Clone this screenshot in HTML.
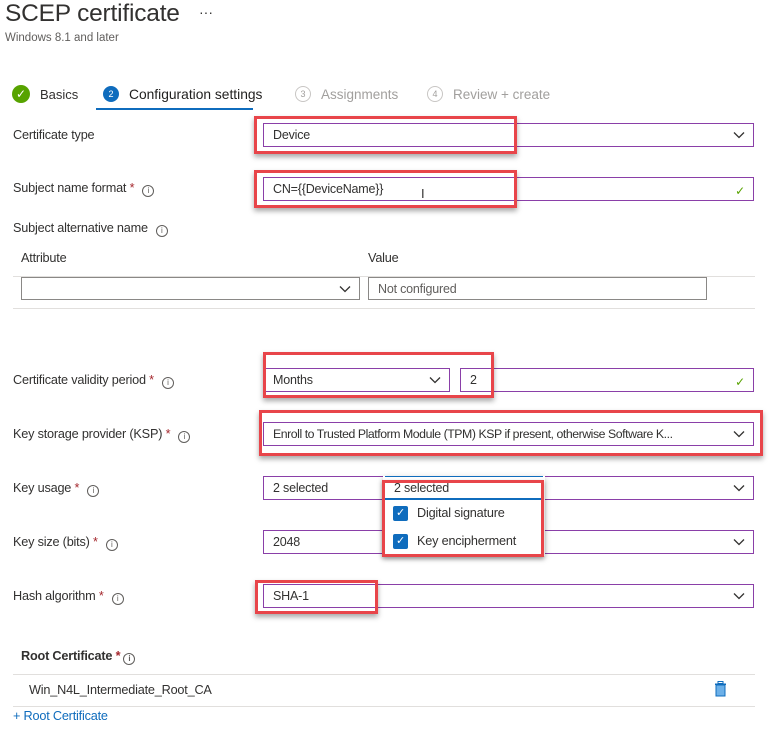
<!DOCTYPE html>
<html><head><meta charset="utf-8"><style>
*{box-sizing:border-box;margin:0;padding:0}
body{width:784px;height:736px;background:#fff;font-family:"Liberation Sans",sans-serif;color:#323130;position:relative;overflow:hidden;font-size:13px}
.a{position:absolute;white-space:nowrap}
.lbl{font-size:12.7px;letter-spacing:-0.2px}
.star{color:#a4262c}
.info{display:inline-block;width:12px;height:12px;border:1px solid #605e5c;border-radius:50%;font-size:8px;line-height:10px;text-align:center;color:#605e5c;margin-left:8px;vertical-align:-1px}
.in{position:absolute;border:1px solid #8a3fa8;height:24px;background:#fff;padding-left:9px;line-height:22px;font-size:12.5px;letter-spacing:-0.2px;overflow:hidden;white-space:nowrap}
.chev{position:absolute;right:8px;top:7px;width:8px;height:8px}
.red{position:absolute;border:3px solid #e8454a;box-shadow:0 3px 5px rgba(0,0,0,.35)}
.chk{position:absolute;right:8px;top:2px;color:#57a300;font-size:12px}
.line{position:absolute;height:1px;background:#e1dfdd}
.cb{display:inline-block;width:15px;height:15px;background:#0f6cbd;border-radius:2px;color:#fff;font-size:11px;text-align:center;line-height:15px;vertical-align:middle;margin-right:9px}
</style></head><body>
<svg width="0" height="0" style="position:absolute"><defs><symbol id="cv" viewBox="0 0 12 8"><path d="M1 1.5 L6 6.5 L11 1.5" fill="none" stroke="#323130" stroke-width="1.3"/></symbol></defs></svg>

<div class="a" style="left:5px;top:0px;font-size:24.5px;color:#323130;letter-spacing:-0.2px">SCEP certificate</div>
<div class="a" style="left:199px;top:4px;font-size:14px">···</div>
<div class="a" style="left:5px;top:32px;font-size:11.5px;color:#605e5c">Windows 8.1 and later</div>

<div class="a" style="left:12px;top:85px;width:18px;height:18px;border-radius:50%;background:#57a300;color:#fff;font-size:12px;text-align:center;line-height:18px">✓</div>
<div class="a" style="left:40px;top:87px;font-size:13px">Basics</div>
<div class="a" style="left:103px;top:86px;width:16px;height:16px;border-radius:50%;background:#0f6cbd;color:#fff;font-size:9px;text-align:center;line-height:16px">2</div>
<div class="a" style="left:129px;top:87px;font-size:13.8px;color:#201f1e">Configuration settings</div>
<div class="a" style="left:96px;top:108px;width:157px;height:2px;background:#0f6cbd"></div>
<div class="a" style="left:295px;top:86px;width:16px;height:16px;border-radius:50%;border:1px solid #c8c6c4;color:#a19f9d;font-size:9px;text-align:center;line-height:14px">3</div>
<div class="a" style="left:321px;top:87px;font-size:13.5px;color:#a19f9d">Assignments</div>
<div class="a" style="left:427px;top:86px;width:16px;height:16px;border-radius:50%;border:1px solid #c8c6c4;color:#a19f9d;font-size:9px;text-align:center;line-height:14px">4</div>
<div class="a" style="left:453px;top:87px;font-size:13.5px;color:#a19f9d">Review + create</div>

<div class="a lbl" style="left:13px;top:128px">Certificate type</div>
<div class="in" style="left:263px;top:123px;width:491px">Device<svg class="chev" style="width:12px"><use href="#cv"/></svg></div>
<div class="red" style="left:254px;top:116px;width:263px;height:38px"></div>

<div class="a lbl" style="left:13px;top:181px">Subject name format <span class="star">*</span><span class="info">i</span></div>
<div class="in" style="left:263px;top:177px;width:491px">CN={{DeviceName}}<span class="chk">✓</span></div>
<div class="a" style="left:421px;top:186px;font-size:13px">I</div>
<div class="red" style="left:254px;top:170px;width:263px;height:38px"></div>

<div class="a lbl" style="left:13px;top:221px">Subject alternative name<span class="info">i</span></div>
<div class="a lbl" style="left:21px;top:251px;color:#323130">Attribute</div>
<div class="a lbl" style="left:368px;top:251px">Value</div>
<div class="line" style="left:13px;top:276px;width:742px"></div>
<div class="in" style="left:21px;top:277px;width:339px;height:23px;border-color:#8a8886"><svg class="chev" style="width:12px"><use href="#cv"/></svg></div>
<div class="in" style="left:368px;top:277px;width:339px;height:23px;border-color:#8a8886;color:#605e5c">Not configured</div>
<div class="line" style="left:13px;top:308px;width:742px"></div>

<div class="a lbl" style="left:13px;top:373px">Certificate validity period <span class="star">*</span><span class="info">i</span></div>
<div class="in" style="left:263px;top:368px;width:187px">Months<svg class="chev" style="width:12px"><use href="#cv"/></svg></div>
<div class="in" style="left:460px;top:368px;width:294px">2<span class="chk">✓</span></div>
<div class="red" style="left:263px;top:352px;width:231px;height:46px"></div>

<div class="a lbl" style="left:13px;top:427px">Key storage provider (KSP) <span class="star">*</span><span class="info">i</span></div>
<div class="in" style="left:263px;top:422px;width:491px;font-size:12.3px;letter-spacing:-0.45px">Enroll to Trusted Platform Module (TPM) KSP if present, otherwise Software K...<svg class="chev" style="width:12px"><use href="#cv"/></svg></div>
<div class="red" style="left:259px;top:410px;width:504px;height:46px"></div>

<div class="a lbl" style="left:13px;top:481px">Key usage <span class="star">*</span><span class="info">i</span></div>
<div class="in" style="left:263px;top:476px;width:491px">2 selected<svg class="chev" style="width:12px"><use href="#cv"/></svg></div>

<div class="a lbl" style="left:13px;top:535px">Key size (bits) <span class="star">*</span><span class="info">i</span></div>
<div class="in" style="left:263px;top:530px;width:491px">2048<svg class="chev" style="width:12px"><use href="#cv"/></svg></div>

<div class="a" style="left:383px;top:476px;width:162px;height:80px;background:#fff;box-shadow:0 2px 6px rgba(0,0,0,.25)"></div>
<div class="a" style="left:385px;top:476px;width:158px;height:24px;border-bottom:2px solid #0f6cbd;border-top:1px solid #0f6cbd;padding-left:9px;line-height:22px;font-size:12.5px;letter-spacing:-0.2px">2 selected</div>
<div class="a lbl" style="left:393px;top:506px"><span class="cb">✓</span>Digital signature</div>
<div class="a lbl" style="left:393px;top:534px"><span class="cb">✓</span>Key encipherment</div>
<div class="red" style="left:382px;top:480px;width:162px;height:77px;box-shadow:0 2px 4px rgba(0,0,0,.3)"></div>

<div class="a lbl" style="left:13px;top:589px">Hash algorithm <span class="star">*</span><span class="info">i</span></div>
<div class="in" style="left:263px;top:584px;width:491px">SHA-1<svg class="chev" style="width:12px"><use href="#cv"/></svg></div>
<div class="red" style="left:255px;top:580px;width:123px;height:34px"></div>

<div class="a lbl" style="left:21px;top:649px;font-weight:bold;color:#323130">Root Certificate <span class="star">*</span><span class="info" style="margin-left:3px">i</span></div>
<div class="line" style="left:13px;top:674px;width:742px"></div>
<div class="a lbl" style="left:29px;top:683px">Win_N4L_Intermediate_Root_CA</div>
<svg class="a" style="left:713px;top:681px" width="15" height="16" viewBox="0 0 15 16"><rect x="5" y="0.5" width="5" height="2" fill="none" stroke="#0f6cbd"/><rect x="2" y="2.5" width="11" height="1.5" fill="#0f6cbd"/><rect x="3" y="4" width="9" height="11" fill="#6cb0e8" stroke="#0f6cbd"/></svg>
<div class="line" style="left:13px;top:706px;width:742px"></div>
<div class="a lbl" style="left:13px;top:709px;color:#0f6cbd">+ Root Certificate</div>
</body></html>
